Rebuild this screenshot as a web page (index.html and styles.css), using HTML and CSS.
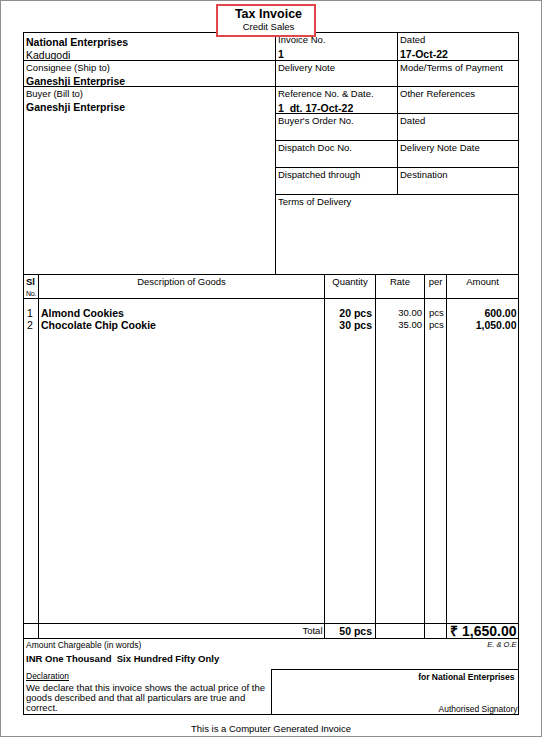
FILE: index.html
```html
<!DOCTYPE html>
<html>
<head>
<meta charset="utf-8">
<title>Tax Invoice</title>
<link rel="stylesheet" href="styles.css">
</head>
<body>
<div class="page">
  <div class="title-box">
    <div class="title">Tax Invoice</div>
    <div class="subtitle">Credit Sales</div>
  </div>

  <div class="invoice">
    <div class="top">
      <div class="party-col">
        <div class="seller">
          <div class="value">National Enterprises</div>
          <div class="addr">Kadugodi</div>
        </div>
        <div class="party consignee">
          <div class="label">Consignee (Ship to)</div>
          <div class="value">Ganeshji Enterprise</div>
        </div>
        <div class="party buyer">
          <div class="label">Buyer (Bill to)</div>
          <div class="value">Ganeshji Enterprise</div>
        </div>
      </div>
      <div class="meta">
        <div class="cell"><div class="label">Invoice No.</div><div class="value">1</div></div>
        <div class="cell"><div class="label">Dated</div><div class="value">17-Oct-22</div></div>
        <div class="cell"><div class="label">Delivery Note</div></div>
        <div class="cell"><div class="label">Mode/Terms of Payment</div></div>
        <div class="cell"><div class="label">Reference No. &amp; Date.</div><div class="value">1&nbsp; dt. 17-Oct-22</div></div>
        <div class="cell"><div class="label">Other References</div></div>
        <div class="cell"><div class="label">Buyer's Order No.</div></div>
        <div class="cell"><div class="label">Dated</div></div>
        <div class="cell"><div class="label">Dispatch Doc No.</div></div>
        <div class="cell"><div class="label">Delivery Note Date</div></div>
        <div class="cell"><div class="label">Dispatched through</div></div>
        <div class="cell"><div class="label">Destination</div></div>
        <div class="cell terms"><div class="label">Terms of Delivery</div></div>
      </div>
    </div>

    <div class="items-head">
      <div class="c-sl"><div class="sl">Sl</div><div class="no">No.</div></div>
      <div>Description of Goods</div>
      <div>Quantity</div>
      <div>Rate</div>
      <div>per</div>
      <div>Amount</div>
    </div>

    <div class="items-body">
      <div class="item">
        <div class="c-sl">1</div>
        <div class="c-desc">Almond Cookies</div>
        <div class="c-qty">20 pcs</div>
        <div class="c-rate">30.00</div>
        <div class="c-per">pcs</div>
        <div class="c-amt">600.00</div>
      </div>
      <div class="item">
        <div class="c-sl">2</div>
        <div class="c-desc">Chocolate Chip Cookie</div>
        <div class="c-qty">30 pcs</div>
        <div class="c-rate">35.00</div>
        <div class="c-per">pcs</div>
        <div class="c-amt">1,050.00</div>
      </div>
    </div>

    <div class="items-total">
      <div class="c-sl"></div>
      <div class="c-total">Total</div>
      <div class="c-qty">50 pcs</div>
      <div></div>
      <div></div>
      <div class="c-grand">₹ 1,650.00</div>
    </div>

    <div class="words">
      <div class="words-top">
        <span class="small-label">Amount Chargeable (in words)</span>
        <span class="eoe">E. &amp; O.E</span>
      </div>
      <div class="words-value">INR One Thousand&nbsp; Six Hundred Fifty Only</div>
    </div>

    <div class="decl-row">
      <div class="declaration">
        <div class="decl-title">Declaration</div>
        <div class="decl-text">We declare that this invoice shows the actual price of the<br>goods described and that all particulars are true and<br>correct.</div>
      </div>
      <div class="signature">
        <div class="for-co">for National Enterprises</div>
        <div class="auth">Authorised Signatory</div>
      </div>
    </div>
  </div>

  <div class="footer-note">This is a Computer Generated Invoice</div>
</div>
</body>
</html>
```

FILE: styles.css
```css
* {
  box-sizing: border-box;
}

html, body {
  margin: 0;
  padding: 0;
  background: #ffffff;
}

body {
  font-family: "Liberation Sans", Arial, sans-serif;
  color: #000000;
}

.page {
  position: relative;
  width: 542px;
  height: 737px;
  border: 1px solid #8f8f8f;
  padding: 31px 0 0 22px;
}

/* highlighted title (overlays the invoice frame) */
.title-box {
  position: absolute;
  left: 215px;
  top: 3px;
  width: 100px;
  height: 33px;
  border: 2.5px solid #e0474b;
  background: #ffffff;
  z-index: 2;
  text-align: center;
  padding: 0.5px 0 0 5px;
}

.title {
  font-size: 12.5px;
  font-weight: bold;
  line-height: 14px;
}

.subtitle {
  font-size: 9.5px;
  line-height: 11px;
}

/* invoice frame */
.invoice {
  width: 496px;
  height: 683px;
  border: 1px solid #000000;
  display: flex;
  flex-direction: column;
}

.label {
  font-size: 9.5px;
  line-height: 11px;
}

.value {
  font-size: 10.5px;
  font-weight: bold;
  line-height: 12.5px;
}

.top {
  display: grid;
  grid-template-columns: 252px 242px;
  height: 242px;
  border-bottom: 1px solid #000000;
}

.party-col {
  border-right: 1px solid #000000;
  display: flex;
  flex-direction: column;
}

.seller {
  height: 28px;
  border-bottom: 1px solid #000000;
  padding: 3px 2px 0 2px;
}

.addr {
  font-size: 10.5px;
  line-height: 12.5px;
}

.party {
  padding: 0.5px 2px 0 2px;
}

.party .value {
  margin-top: 2.5px;
}

.consignee {
  height: 26px;
  border-bottom: 1px solid #000000;
}

.buyer {
  flex: 1;
}

.meta {
  display: grid;
  grid-template-columns: 122px 120px;
  grid-template-rows: 28px 26px 27px 27px 27px 27px 1fr;
}

.cell {
  border-bottom: 1px solid #000000;
  padding: 1px 2px 0 2px;
}

.cell:nth-child(odd) {
  border-right: 1px solid #000000;
}

.cell .value {
  margin-top: 2.5px;
}

.cell.terms {
  grid-column: span 2;
  border-right: none;
  border-bottom: none;
}

/* goods table */
.items-head,
.items-body,
.items-total {
  display: grid;
  grid-template-columns: 15px 286px 51px 49px 22px 71px;
}

.items-head > div,
.items-body .item > div,
.items-total > div {
  border-right: 1px solid #000000;
}

.items-head > div:last-child,
.items-body .item > div:last-child,
.items-total > div:last-child {
  border-right: none;
}

.items-head {
  height: 24px;
  border-bottom: 1px solid #000000;
}

.items-head > div {
  font-size: 9.5px;
  line-height: 11px;
  text-align: center;
  padding-top: 1px;
}

.items-head > .c-sl {
  text-align: left;
  padding-left: 2px;
}

.sl {
  font-weight: bold;
}

.no {
  font-size: 7px;
  line-height: 9px;
  margin-top: 2px;
  letter-spacing: -0.3px;
}

.items-body {
  height: 325px;
  border-bottom: 1px solid #000000;
  grid-template-rows: auto 1fr;
}

.item {
  display: contents;
}

.item > div {
  font-size: 10.5px;
  line-height: 12px;
}

.item:first-child > div {
  padding-top: 8px;
}

.item > .c-sl {
  padding-left: 3px;
}

.item > .c-desc {
  font-weight: bold;
  padding-left: 2px;
}

.c-qty {
  font-weight: bold;
  text-align: right;
  padding-right: 3px;
}

.item > .c-rate {
  font-size: 9.5px;
  text-align: right;
  padding-right: 2px;
}

.item > .c-per {
  font-size: 9.5px;
  padding-left: 4px;
}

.item > .c-amt {
  font-weight: bold;
  text-align: right;
  padding-right: 1.5px;
}

.items-total {
  height: 15px;
  border-bottom: 1px solid #000000;
}

.items-total > div {
  line-height: 14px;
  font-size: 10.5px;
}

.c-total {
  font-size: 9.5px;
  text-align: right;
  padding-right: 1.5px;
}

.items-total > .c-total {
  font-size: 9.5px;
}

.items-total > .c-grand {
  font-size: 14px;
  font-weight: bold;
  text-align: right;
  padding-right: 1.5px;
}

/* amount in words */
.words {
  height: 30px;
  padding: 1.3px 1.5px 0 2px;
}

.words-top {
  display: flex;
  justify-content: space-between;
  line-height: 10px;
}

.small-label {
  font-size: 8.5px;
}

.eoe {
  font-size: 7.5px;
  font-style: italic;
}

.words-value {
  font-size: 9.5px;
  font-weight: bold;
  line-height: 12px;
  margin-top: 3px;
}

/* declaration + signature */
.decl-row {
  flex: 1;
  display: flex;
}

.declaration {
  flex: 1;
  padding: 1.5px 0 0 2px;
}

.decl-title {
  font-size: 8.5px;
  line-height: 10px;
  text-decoration: underline;
}

.decl-text {
  font-size: 9.5px;
  line-height: 10.3px;
  margin-top: 2px;
  white-space: nowrap;
}

.signature {
  width: 247px;
  border-left: 1px solid #000000;
  border-top: 1px solid #000000;
  display: flex;
  flex-direction: column;
  justify-content: space-between;
  align-items: flex-end;
  padding: 1.6px 0.5px 0 0;
}

.for-co {
  font-size: 8.5px;
  font-weight: bold;
  line-height: 10px;
  padding-right: 3px;
}

.auth {
  font-size: 8.5px;
  line-height: 9px;
}

.footer-note {
  width: 496px;
  text-align: center;
  font-size: 9.5px;
  line-height: 11px;
  margin-top: 8px;
}
```
